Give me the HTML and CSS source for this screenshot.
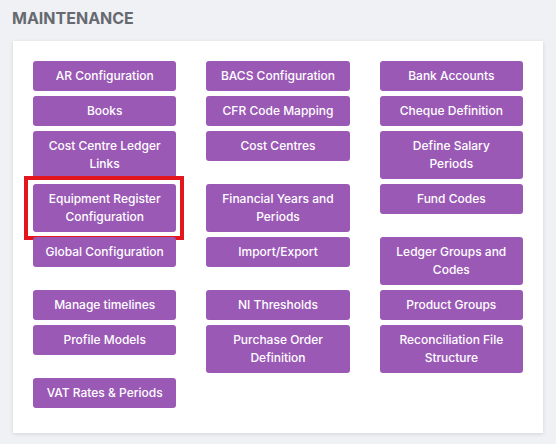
FILE: index.html
```html
<!DOCTYPE html>
<html lang="en">
<head>
  <meta charset="UTF-8" />
  <title>Maintenance</title>
  <meta name="viewport" content="width=device-width, initial-scale=1" />
  <link rel="stylesheet" href="styles.css">
</head>
<body>

  <h2 class="section-title">MAINTENANCE</h2>

  <div class="panel">
    <div class="links">
      <a class="link-btn" href="#">AR Configuration</a>
      <a class="link-btn" href="#">BACS Configuration</a>
      <a class="link-btn" href="#">Bank Accounts</a>

      <a class="link-btn" href="#">Books</a>
      <a class="link-btn" href="#">CFR Code Mapping</a>
      <a class="link-btn" href="#">Cheque Definition</a>

      <a class="link-btn" href="#">Cost Centre Ledger Links</a>
      <a class="link-btn" href="#">Cost Centres</a>
      <a class="link-btn" href="#">Define Salary Periods</a>

      <a class="link-btn highlighted" href="#">Equipment Register Configuration</a>
      <a class="link-btn" href="#">Financial Years and Periods</a>
      <a class="link-btn" href="#">Fund Codes</a>

      <a class="link-btn" href="#">Global Configuration</a>
      <a class="link-btn" href="#">Import/Export</a>
      <a class="link-btn" href="#">Ledger Groups and Codes</a>

      <a class="link-btn" href="#">Manage timelines</a>
      <a class="link-btn" href="#">NI Thresholds</a>
      <a class="link-btn" href="#">Product Groups</a>

      <a class="link-btn" href="#">Profile Models</a>
      <a class="link-btn" href="#">Purchase Order Definition</a>
      <a class="link-btn" href="#">Reconciliation File Structure</a>

      <a class="link-btn" href="#">VAT Rates &amp; Periods</a>
    </div>
  </div>

</body>
</html>
```

FILE: styles.css
```css
:root {
  --purple: #9b59b6;
  --bg: #f0f1f5;
  --title: #666a70;
  --highlight: #e3161e;
}
* {
  margin: 0;
  padding: 0;
  box-sizing: border-box;
}
body {
  font-family: 'Inter', 'Liberation Sans', sans-serif;
  background: var(--bg);
  padding: 9px 13px;
}
.section-title {
  color: var(--title);
  font-size: 16px;
  font-weight: 700;
  line-height: 18px;
  margin-left: -1px;
  margin-bottom: 14px;
}
.panel {
  background: white;
  box-shadow: 0 1px 4px rgba(0, 0, 0, 0.12);
  padding: 20px 20px 25px;
  width: 530px;
}
.links {
  display: grid;
  grid-template-columns: repeat(3, 1fr);
  column-gap: 30px;
  row-gap: 5px;
  align-items: start;
}
.link-btn {
  display: block;
  position: relative;
  background: var(--purple);
  color: white;
  text-decoration: none;
  text-align: center;
  font-size: 12px;
  font-weight: 500;
  line-height: 18px;
  padding: 6px 12px;
  border-radius: 3px;
}
.link-btn.highlighted::after {
  content: '';
  position: absolute;
  inset: -8px -8px -8px -9px;
  border: 4px solid var(--highlight);
}
```
